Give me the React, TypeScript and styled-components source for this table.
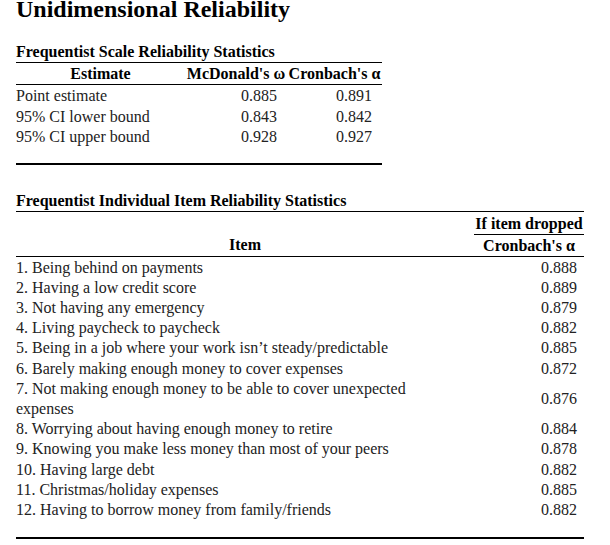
import React from 'react';
import styled, { createGlobalStyle } from 'styled-components';

const Global = createGlobalStyle`
  html, body { margin: 0; padding: 0; background: #ffffff; }
  body {
    font-family: "Liberation Serif", "Times New Roman", serif;
    color: #000;
  }
`;

const Page = styled.div`
  padding: 0 16px;
`;

const Title = styled.h1`
  margin: 0;
  font-size: 24px;
  line-height: 18px;
  font-weight: bold;
  color: #000;
  white-space: nowrap;
`;

const Block = styled.section<{ $width: number; $top: number }>`
  width: ${(p) => p.$width}px;
  margin-top: ${(p) => p.$top}px;
`;

const Heading = styled.div`
  font-size: 16px;
  font-weight: bold;
  line-height: 20px;
  border-bottom: 1px solid #000;
  white-space: nowrap;
`;

const Table = styled.table`
  width: 100%;
  border-collapse: collapse;
  table-layout: fixed;
  font-size: 16px;
`;

const Head = styled.th<{ $line?: boolean; $top?: number }>`
  font-weight: bold;
  text-align: center;
  line-height: 20px;
  padding: ${(p) => p.$top ?? 0}px 0 0 0;
  white-space: nowrap;
  color: #000;
  border-bottom: ${(p) => (p.$line ? '1px solid #000' : 'none')};
`;

const Label = styled.td<{ $lh: number; $right?: number }>`
  text-align: left;
  padding: 0 ${(p) => p.$right ?? 0}px 0 0;
  line-height: ${(p) => p.$lh}px;
  color: #222;
  vertical-align: middle;
`;

const Num = styled.td<{ $lh: number; $pad: number }>`
  text-align: right;
  padding: 0 ${(p) => p.$pad}px 0 0;
  line-height: ${(p) => p.$lh}px;
  color: #222;
  vertical-align: middle;
`;

const FirstRow = styled.tr<{ $gap: number }>`
  & > td {
    padding-top: ${(p) => p.$gap}px;
  }
`;

const TableEnd = styled.div<{ $space: number }>`
  height: ${(p) => p.$space}px;
  border-bottom: 2px solid #000;
`;

const scaleRows = [
  { label: 'Point estimate', omega: '0.885', alpha: '0.891' },
  { label: '95% CI lower bound', omega: '0.843', alpha: '0.842' },
  { label: '95% CI upper bound', omega: '0.928', alpha: '0.927' },
];

const itemRows = [
  ['1. Being behind on payments', '0.888'],
  ['2. Having a low credit score', '0.889'],
  ['3. Not having any emergency', '0.879'],
  ['4. Living paycheck to paycheck', '0.882'],
  ['5. Being in a job where your work isn\u2019t steady/predictable', '0.885'],
  ['6. Barely making enough money to cover expenses', '0.872'],
  ['7. Not making enough money to be able to cover unexpected expenses', '0.876'],
  ['8. Worrying about having enough money to retire', '0.884'],
  ['9. Knowing you make less money than most of your peers', '0.878'],
  ['10. Having large debt', '0.882'],
  ['11. Christmas/holiday expenses', '0.885'],
  ['12. Having to borrow money from family/friends', '0.882'],
];

export default function App() {
  return (
    <>
      <Global />
      <Page>
        <Title>Unidimensional Reliability</Title>

        <Block $width={366} $top={24}>
          <Heading>Frequentist Scale Reliability Statistics</Heading>
          <Table>
            <colgroup>
              <col style={{ width: 169 }} />
              <col style={{ width: 102 }} />
              <col style={{ width: 95 }} />
            </colgroup>
            <thead>
              <tr>
                <Head $line $top={1}>Estimate</Head>
                <Head $line $top={1}>McDonald's ω</Head>
                <Head $line $top={1}>Cronbach's α</Head>
              </tr>
            </thead>
            <tbody>
              {scaleRows.map((r, i) => {
                const Row = i === 0 ? FirstRow : 'tr';
                return (
                  <Row key={r.label} $gap={1}>
                    <Label $lh={20.5}>{r.label}</Label>
                    <Num $lh={20.5} $pad={10}>{r.omega}</Num>
                    <Num $lh={20.5} $pad={10}>{r.alpha}</Num>
                  </Row>
                );
              })}
            </tbody>
          </Table>
          <TableEnd $space={15} />
        </Block>

        <Block $width={568} $top={26}>
          <Heading>Frequentist Individual Item Reliability Statistics</Heading>
          <Table>
            <colgroup>
              <col style={{ width: 458 }} />
              <col style={{ width: 110 }} />
            </colgroup>
            <thead>
              <tr>
                <Head $top={2} />
                <Head $line $top={2}>If item dropped</Head>
              </tr>
              <tr>
                <Head $line $top={1}>Item</Head>
                <Head $line $top={1}>Cronbach's α</Head>
              </tr>
            </thead>
            <tbody>
              {itemRows.map(([label, value], i) => {
                const Row = i === 0 ? FirstRow : 'tr';
                return (
                  <Row key={label} $gap={1}>
                    <Label $lh={20.2} $right={24}>{label}</Label>
                    <Num $lh={20.2} $pad={7}>{value}</Num>
                  </Row>
                );
              })}
            </tbody>
          </Table>
          <TableEnd $space={17} />
        </Block>
      </Page>
    </>
  );
}
